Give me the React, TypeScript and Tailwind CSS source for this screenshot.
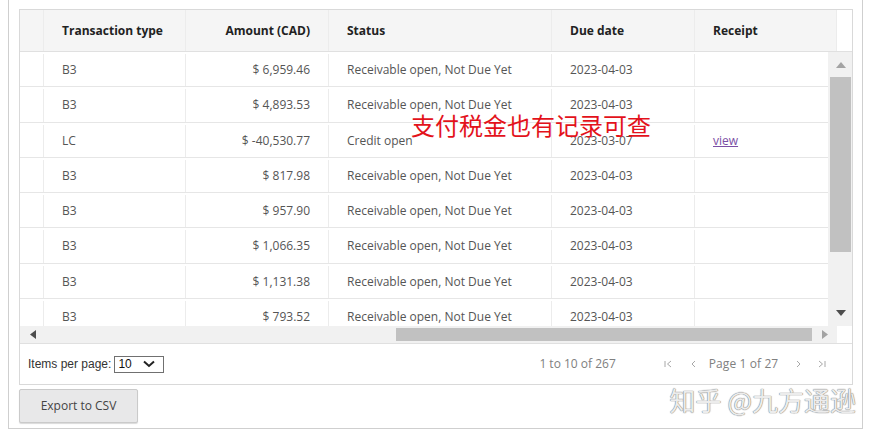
import React from 'react'

interface Row { type: string; amount: string; status: string; due: string; receipt?: boolean }

const rows: Row[] = [
  { type: 'B3', amount: '$ 6,959.46', status: 'Receivable open, Not Due Yet', due: '2023-04-03' },
  { type: 'B3', amount: '$ 4,893.53', status: 'Receivable open, Not Due Yet', due: '2023-04-03' },
  { type: 'LC', amount: '$ -40,530.77', status: 'Credit open', due: '2023-03-07', receipt: true },
  { type: 'B3', amount: '$ 817.98', status: 'Receivable open, Not Due Yet', due: '2023-04-03' },
  { type: 'B3', amount: '$ 957.90', status: 'Receivable open, Not Due Yet', due: '2023-04-03' },
  { type: 'B3', amount: '$ 1,066.35', status: 'Receivable open, Not Due Yet', due: '2023-04-03' },
  { type: 'B3', amount: '$ 1,131.38', status: 'Receivable open, Not Due Yet', due: '2023-04-03' },
  { type: 'B3', amount: '$ 793.52', status: 'Receivable open, Not Due Yet', due: '2023-04-03' },
]

const cell = 'shrink-0 h-full flex items-center border-r border-[#ececec] px-[18px]'

function Nav({ d }: { d: string }) {
  return (
    <svg width="10" height="10" viewBox="0 0 10 10" fill="none" stroke="#a8a8a8" strokeWidth="1">
      <path d={d} />
    </svg>
  )
}

export default function App() {
  return (
    <div className="w-[876px] h-[435px] bg-white pl-2 overflow-hidden relative" style={{ fontFamily: '"Open Sans", "Noto Sans CJK SC", sans-serif' }}>
      <div className="w-[855px] border-l border-r border-b border-[#cfcfcf] pl-[10px] pt-[9px] pb-[4px]">
        {/* grid */}
        <div className="w-[834px] border border-[#d9d9d9] flex flex-col">
          {/* header */}
          <div className="h-[42px] flex border-b border-[#e0e0e0] text-[12px] font-bold text-[#222]">
            <div className="flex bg-[#f5f5f5] h-full">
              <div className="shrink-0 w-[24px] h-full border-r border-[#ececec]" />
              <div className={`${cell} w-[142px]`}>Transaction type</div>
              <div className={`${cell} w-[143px] justify-end`}>Amount (CAD)</div>
              <div className={`${cell} w-[223px]`}>Status</div>
              <div className={`${cell} w-[143px]`}>Due date</div>
              <div className={`${cell} w-[142px]`}>Receipt</div>
            </div>
            <div className="flex-1" />
          </div>

          {/* body */}
          <div className="h-[274px] flex">
            <div className="w-[808px] overflow-hidden text-[12px] text-[#555]">
              <div className="w-[817px]">
                {rows.map((r, i) => (
                  <div key={i} className="h-[35.25px] flex border-b border-[#e6e6e6] pt-[2px]">
                    <div className="shrink-0 w-[24px] h-full border-r border-[#ececec]" />
                    <div className={`${cell} w-[142px]`}>{r.type}</div>
                    <div className={`${cell} w-[143px] justify-end`}>{r.amount}</div>
                    <div className={`${cell} w-[223px]`}>{r.status}</div>
                    <div className={`${cell} w-[143px]`}>{r.due}</div>
                    <div className={`${cell} w-[142px]`}>
                      {r.receipt && <span className="text-[#7b4fa5] underline">view</span>}
                    </div>
                  </div>
                ))}
              </div>
            </div>
            {/* vertical scrollbar */}
            <div className="w-[24px] bg-[#f1f1f1] flex flex-col items-center pl-[2px] pr-[1px]">
              <div className="h-[25px] flex items-center justify-center">
                <svg width="10" height="6" viewBox="0 0 10 6"><path d="M0 6 L5 0 L10 6 Z" fill="#a3a3a3" /></svg>
              </div>
              <div className="w-[21px] h-[175px] bg-[#c1c1c1]" />
              <div className="flex-1" />
              <div className="h-[16px] flex items-start justify-center">
                <svg width="10" height="6" viewBox="0 0 10 6"><path d="M0 0 L10 0 L5 6 Z" fill="#4d4d4d" /></svg>
              </div>
            </div>
          </div>

          {/* horizontal scrollbar */}
          <div className="h-[17px] flex">
            <div className="w-[817px] bg-[#f1f1f1] flex items-center">
              <div className="w-[23px] flex justify-center pl-[2px]">
                <svg width="6" height="9" viewBox="0 0 6 9"><path d="M6 0 L6 9 L0 4.5 Z" fill="#4d4d4d" /></svg>
              </div>
              <div className="ml-[353px] w-[416px] h-[13px] bg-[#c1c1c1]" />
              <div className="flex-1 flex justify-center">
                <svg width="6" height="9" viewBox="0 0 6 9"><path d="M0 0 L0 9 L6 4.5 Z" fill="#a3a3a3" /></svg>
              </div>
            </div>
            <div className="flex-1 bg-white" />
          </div>

          {/* footer */}
          <div className="h-[41px] border-t border-[#e0e0e0] flex items-center pl-[8px]">
            <div className="flex items-center gap-[3px] text-[12px] text-[#333]" style={{ fontFamily: '"Liberation Sans", Arial, sans-serif' }}>
              <span>Items per page:</span>
              <div className="w-[50px] h-[17px] border border-[#707070] flex items-center justify-between pl-[3px] pr-[8px] text-[12px] text-[#111]">
                <span>10</span>
                <svg width="12" height="8" viewBox="0 0 12 8" fill="none" stroke="#222" strokeWidth="2"><path d="M1 1.5 L6 6 L11 1.5" /></svg>
              </div>
            </div>
            <div className="ml-[375px] text-[12px] text-[#808080]">1 to 10 of 267</div>
            <div className="ml-[47px] flex items-center text-[12px] text-[#808080]">
              <Nav d="M2 2 L2 8 M8 2 L4.5 5 L8 8" />
              <span className="w-[16px]" />
              <Nav d="M6 2 L3 5 L6 8" />
              <span className="ml-[10px] tracking-[0.1px]">Page 1 of 27</span>
              <span className="w-[15px]" />
              <Nav d="M4 2 L7 5 L4 8" />
              <span className="w-[14px]" />
              <Nav d="M2 2 L5.5 5 L2 8 M8 2 L8 8" />
            </div>
          </div>
        </div>

        {/* bottom */}
        <div className="h-[39px] flex items-start justify-between pt-[4px]">
          <button className="w-[119px] h-[34px] bg-[#e8e8e9] border border-[#cacaca] rounded-[2px] shadow-[0_1px_1px_rgba(0,0,0,0.15)] text-[12px] text-[#444]">
            Export to CSV
          </button>
          <div className="mr-[6px] text-[26px] leading-none mt-[-2px] text-[#ececec] [text-shadow:0_0_1px_#777,0_0_1px_#777]" style={{ fontFamily: '"Noto Sans CJK SC", sans-serif' }}>
            知乎 @九方通逊
          </div>
        </div>
      </div>

      {/* red overlay annotation */}
      <div className="absolute left-[411px] top-[113px] text-[24px] leading-none text-[#e3121b]" style={{ fontFamily: '"Noto Sans CJK SC", sans-serif' }}>
        支付税金也有记录可查
      </div>
    </div>
  )
}
